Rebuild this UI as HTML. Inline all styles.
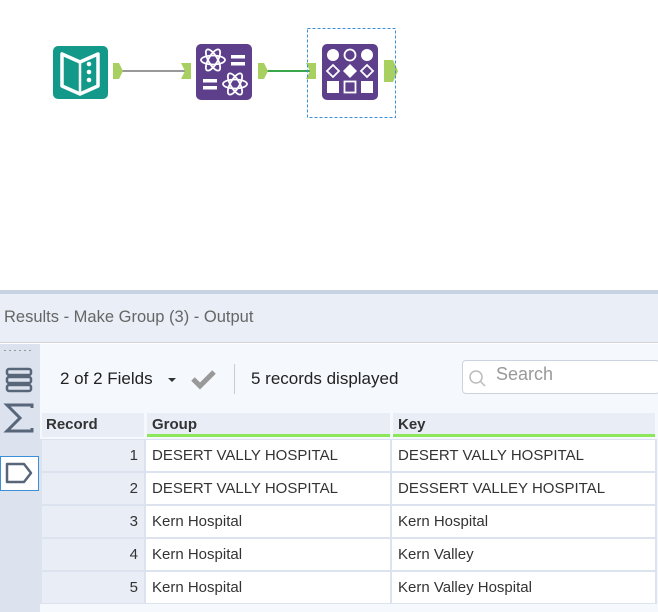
<!DOCTYPE html>
<html><head><style>
body{margin:0;width:658px;height:612px;background:#fff;font-family:"Liberation Sans",sans-serif;position:relative;overflow:hidden}
.a{position:absolute}
.t{font-size:17px;color:#222}
.cell{position:absolute;background:#fff;font-size:15px;color:#333;line-height:31px;padding-left:6px;box-sizing:border-box;height:31px}
.rec{position:absolute;background:#e8edf6;font-size:15px;color:#333;line-height:31px;text-align:right;padding-right:6px;box-sizing:border-box;height:31px;left:42px;width:102px}
</style></head><body>
<svg class="a" style="left:0;top:0" width="658" height="290">
<line x1="122" y1="71" x2="186" y2="71" stroke="#999" stroke-width="2"/>
<line x1="266" y1="71" x2="310" y2="71" stroke="#3aa84a" stroke-width="2"/>
<path d="M113 63h6l4 8-4 8h-6z" fill="#a8d060"/>
<path d="M181 63h10v16h-10l4-8z" fill="#a8d060"/>
<path d="M258 63h6l4 8-4 8h-6z" fill="#a8d060"/>
<path d="M306 63h10v16h-10l4-8z" fill="#a8d060"/>
<path d="M384 60h9l5 11-5 11h-9z" fill="#a8d060"/>
<rect x="53" y="46" width="55" height="53" rx="5" fill="#12998a"/>
<path d="M62 54v32l18 8 18-8v-32l-18 8z" fill="none" stroke="#fff" stroke-width="3.5" stroke-linejoin="round"/>
<line x1="80" y1="62" x2="80" y2="94" stroke="#fff" stroke-width="2.5"/>
<circle cx="89" cy="64" r="2.3" fill="#fff"/><circle cx="89" cy="72" r="2.3" fill="#fff"/><circle cx="89" cy="80" r="2.3" fill="#fff"/>
<rect x="196" y="44" width="56" height="56" rx="5" fill="#5d3f8c"/>
<g fill="none" stroke="#fff" stroke-width="1.8">
<ellipse cx="213" cy="60" rx="12" ry="4.5"/><ellipse cx="213" cy="60" rx="12" ry="4.5" transform="rotate(60 213 60)"/><ellipse cx="213" cy="60" rx="12" ry="4.5" transform="rotate(-60 213 60)"/>
<ellipse cx="235" cy="84" rx="12" ry="4.5"/><ellipse cx="235" cy="84" rx="12" ry="4.5" transform="rotate(60 235 84)"/><ellipse cx="235" cy="84" rx="12" ry="4.5" transform="rotate(-60 235 84)"/>
</g>
<rect x="231" y="55" width="14" height="3.5" fill="#fff"/><rect x="231" y="62" width="14" height="3.5" fill="#fff"/>
<rect x="203" y="79" width="14" height="3.5" fill="#fff"/><rect x="203" y="86" width="14" height="3.5" fill="#fff"/>
<rect x="307.5" y="28.5" width="88" height="89" fill="none" stroke="#3b8fd9" stroke-dasharray="3,2"/>
<rect x="322" y="44" width="56" height="56" rx="5" fill="#5d3f8c"/>
<circle cx="333" cy="55" r="6" fill="#fff"/><circle cx="350" cy="55" r="5.5" fill="none" stroke="#fff" stroke-width="1.8"/><circle cx="367" cy="55" r="6" fill="#fff"/>
<path d="M333 65l6 6-6 6-6-6z" fill="none" stroke="#fff" stroke-width="1.8"/><path d="M350 64l7 7-7 7-7-7z" fill="#fff"/><path d="M367 65l6 6-6 6-6-6z" fill="none" stroke="#fff" stroke-width="1.8"/>
<rect x="327" y="81" width="12" height="12" fill="#fff"/><rect x="344.5" y="81.5" width="11" height="11" fill="none" stroke="#fff" stroke-width="1.8"/><rect x="361" y="81" width="12" height="12" fill="#fff"/>
</svg>
<div class="a" style="left:0;top:290px;width:658px;height:4px;background:#c7d2e3"></div>
<div class="a" style="left:0;top:294px;width:658px;height:48px;background:#e9eef7;border-bottom:1px solid #cfd3da"></div>
<div class="a" style="left:4px;top:308px;font-size:16.5px;color:#666">Results - Make Group (3) - Output</div>
<div class="a" style="left:0;top:344px;width:40px;height:268px;background:#dde3ee"></div>
<div class="a" style="left:40px;top:344px;width:618px;height:268px;background:#f5f8fc"></div>
<svg class="a" style="left:0;top:344px" width="40" height="150">
<g fill="#999"><rect x="4" y="6" width="2" height="1"/><rect x="9" y="6" width="2" height="1"/><rect x="14" y="6" width="2" height="1"/><rect x="19" y="6" width="2" height="1"/><rect x="24" y="6" width="2" height="1"/><rect x="29" y="6" width="2" height="1"/></g>
<g fill="none" stroke="#58667a" stroke-width="2.5"><rect x="7" y="25" width="24" height="6" rx="2"/><rect x="7" y="33" width="24" height="6" rx="2"/><rect x="7" y="41" width="24" height="6" rx="2"/>
<path d="M32 64V61H7L20 74 7 87H32V84" stroke-width="3" stroke-linejoin="miter"/></g>
<rect x="0.5" y="112.5" width="38" height="34" fill="#fff" stroke="#3b8fd9"/>
<path d="M7 120h17l7 9-7 9h-17z" fill="none" stroke="#58667a" stroke-width="2.5" stroke-linejoin="round"/>
</svg>
<div class="a t" style="left:60px;top:369px">2 of 2 Fields</div>
<div class="a" style="left:168px;top:378px;border:4px solid transparent;border-top:4px solid #333;border-bottom:0"></div>
<svg class="a" style="left:190px;top:368px" width="28" height="22"><path d="M3 11l7 7 14-14" fill="none" stroke="#999" stroke-width="5"/></svg>
<div class="a" style="left:234px;top:364px;width:1px;height:30px;background:#ccc"></div>
<div class="a t" style="left:251px;top:369px">5 records displayed</div>
<div class="a" style="left:462px;top:360px;width:196px;height:32px;background:#fff;border:1px solid #ccd3e0;border-radius:4px"></div>
<svg class="a" style="left:467px;top:368px" width="20" height="20"><circle cx="9" cy="9" r="6" fill="none" stroke="#bbb" stroke-width="1.5"/><line x1="13" y1="13" x2="18" y2="18" stroke="#bbb" stroke-width="1.5"/></svg>
<div class="a" style="left:496px;top:364px;font-size:18px;color:#999">Search</div>
<div class="a" style="left:42px;top:413px;width:102px;height:24px;background:#e8edf6;font-weight:bold;font-size:15px;color:#333;line-height:24px;padding-left:4px;box-sizing:border-box">Record</div>
<div class="a" style="left:147px;top:413px;width:243px;height:24px;background:#e8edf6;border-bottom:3px solid #8ce85a;font-weight:bold;font-size:15px;color:#333;line-height:24px;padding-left:5px;box-sizing:border-box">Group</div>
<div class="a" style="left:393px;top:413px;width:262px;height:24px;background:#e8edf6;border-bottom:3px solid #8ce85a;font-weight:bold;font-size:15px;color:#333;line-height:24px;padding-left:5px;box-sizing:border-box">Key</div>
<div class="a" style="left:40px;top:439px;width:617px;height:165px;background:#dde3ee"></div>
<div class="rec" style="top:440px">1</div><div class="cell" style="left:146px;top:440px;width:244px">DESERT VALLY HOSPITAL</div><div class="cell" style="left:392px;top:440px;width:263px">DESERT VALLY HOSPITAL</div>
<div class="rec" style="top:473px">2</div><div class="cell" style="left:146px;top:473px;width:244px">DESERT VALLY HOSPITAL</div><div class="cell" style="left:392px;top:473px;width:263px">DESSERT VALLEY HOSPITAL</div>
<div class="rec" style="top:506px">3</div><div class="cell" style="left:146px;top:506px;width:244px">Kern Hospital</div><div class="cell" style="left:392px;top:506px;width:263px">Kern Hospital</div>
<div class="rec" style="top:539px">4</div><div class="cell" style="left:146px;top:539px;width:244px">Kern Hospital</div><div class="cell" style="left:392px;top:539px;width:263px">Kern Valley</div>
<div class="rec" style="top:572px">5</div><div class="cell" style="left:146px;top:572px;width:244px">Kern Hospital</div><div class="cell" style="left:392px;top:572px;width:263px">Kern Valley Hospital</div>
<div class="a" style="left:40px;top:604px;width:618px;height:8px;background:#f5f8fc"></div>
</body></html>
